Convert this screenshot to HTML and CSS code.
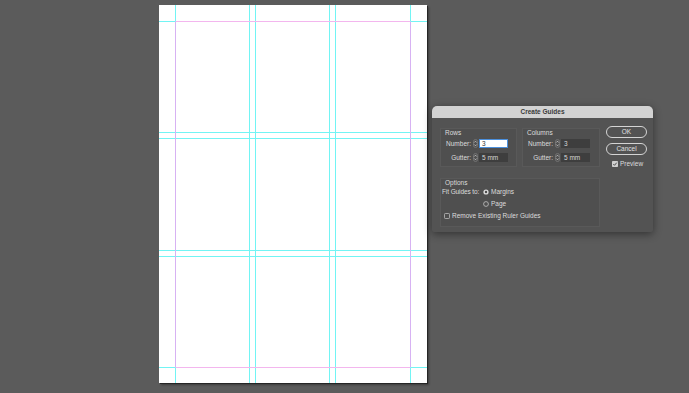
FILE: index.html
```html
<!DOCTYPE html>
<html lang="en">
    <head>
        <meta charset="utf-8" />
        <title>Create Guides</title>
        <link rel="stylesheet" href="styles.css">
    </head>
    <body>
        <div id="workspace">
            <!-- the document page with margin + ruler guides -->
            <div class="page">
                <svg class="guides" width="268" height="378" viewBox="0 0 268 378">
                    <g stroke="#72f4f4" stroke-width="1">
                        <line x1="16.5" y1="0" x2="16.5" y2="378"/>
                        <line x1="90.5" y1="0" x2="90.5" y2="378"/>
                        <line x1="96.5" y1="0" x2="96.5" y2="378"/>
                        <line x1="170.5" y1="0" x2="170.5" y2="378"/>
                        <line x1="176.5" y1="0" x2="176.5" y2="378"/>
                        <line x1="251.5" y1="0" x2="251.5" y2="378"/>
                        <line x1="0" y1="16.5" x2="268" y2="16.5"/>
                        <line x1="0" y1="127.5" x2="268" y2="127.5"/>
                        <line x1="0" y1="133.5" x2="268" y2="133.5"/>
                        <line x1="0" y1="245.5" x2="268" y2="245.5"/>
                        <line x1="0" y1="251.5" x2="268" y2="251.5"/>
                        <line x1="0" y1="362.5" x2="268" y2="362.5"/>
                    </g>
                    <!-- margins -->
                    <g stroke-width="1">
                        <line x1="16.5" y1="16.5" x2="251.5" y2="16.5" stroke="#f3b6ee"/>
                        <line x1="16.5" y1="362.5" x2="251.5" y2="362.5" stroke="#f3b6ee"/>
                        <line x1="16.5" y1="17" x2="16.5" y2="362" stroke="#d7b2f3"/>
                        <line x1="251.5" y1="17" x2="251.5" y2="362" stroke="#d7b2f3"/>
                    </g>
                </svg>
            </div>

            <div class="dialog">
                <div class="titlebar">Create Guides</div>
                <div class="dlgBody">
                    <div class="mainCol">
                        <div class="groupRow">
                            <div class="group rowsGroup">
                                <div class="legend">Rows</div>
                                <div class="field">
                                    <span class="lbl">Number:</span>
                                    <svg class="stepper" width="5" height="9" viewBox="0 0 5 9"><rect x="0.5" y="0.5" width="4" height="8" rx="2" fill="none" stroke="#7a7a7a" stroke-width="0.8"/><path d="M1.3 3.5 L2.5 2.2 L3.7 3.5 M1.3 5.5 L2.5 6.8 L3.7 5.5" fill="none" stroke="#d0d0d0" stroke-width="0.8"/></svg>
                                    <span class="inp focus">3</span>
                                </div>
                                <div class="field">
                                    <span class="lbl">Gutter:</span>
                                    <svg class="stepper" width="5" height="9" viewBox="0 0 5 9"><rect x="0.5" y="0.5" width="4" height="8" rx="2" fill="none" stroke="#7a7a7a" stroke-width="0.8"/><path d="M1.3 3.5 L2.5 2.2 L3.7 3.5 M1.3 5.5 L2.5 6.8 L3.7 5.5" fill="none" stroke="#d0d0d0" stroke-width="0.8"/></svg>
                                    <span class="inp">5 mm</span>
                                </div>
                            </div>
                            <div class="group colsGroup">
                                <div class="legend">Columns</div>
                                <div class="field">
                                    <span class="lbl">Number:</span>
                                    <svg class="stepper" width="5" height="9" viewBox="0 0 5 9"><rect x="0.5" y="0.5" width="4" height="8" rx="2" fill="none" stroke="#7a7a7a" stroke-width="0.8"/><path d="M1.3 3.5 L2.5 2.2 L3.7 3.5 M1.3 5.5 L2.5 6.8 L3.7 5.5" fill="none" stroke="#d0d0d0" stroke-width="0.8"/></svg>
                                    <span class="inp">3</span>
                                </div>
                                <div class="field">
                                    <span class="lbl">Gutter:</span>
                                    <svg class="stepper" width="5" height="9" viewBox="0 0 5 9"><rect x="0.5" y="0.5" width="4" height="8" rx="2" fill="none" stroke="#7a7a7a" stroke-width="0.8"/><path d="M1.3 3.5 L2.5 2.2 L3.7 3.5 M1.3 5.5 L2.5 6.8 L3.7 5.5" fill="none" stroke="#d0d0d0" stroke-width="0.8"/></svg>
                                    <span class="inp">5 mm</span>
                                </div>
                            </div>
                        </div>

                        <div class="group optGroup">
                            <div class="legend">Options</div>
                            <div class="optGrid">
                                <span class="optLbl">Fit Guides to:</span>
                                <span class="choice">
                                    <svg width="6" height="6" viewBox="0 0 6 6"><circle cx="3" cy="3" r="2.6" fill="#dcdcdc"/><circle cx="3" cy="3" r="1.2" fill="#4a4a4a"/></svg>
                                    Margins
                                </span>
                                <span></span>
                                <span class="choice">
                                    <svg width="6" height="6" viewBox="0 0 6 6"><circle cx="3" cy="3" r="2.4" fill="none" stroke="#c4c4c4" stroke-width="0.8"/></svg>
                                    Page
                                </span>
                            </div>
                            <div class="check removeChk">
                                <svg width="6" height="6" viewBox="0 0 6 6"><rect x="0.5" y="0.5" width="5" height="5" rx="0.8" fill="none" stroke="#bdbdbd" stroke-width="0.8"/></svg>
                                Remove Existing Ruler Guides
                            </div>
                        </div>
                    </div>

                    <div class="btnCol">
                        <a class="btn">OK</a>
                        <a class="btn">Cancel</a>
                        <div class="check previewChk">
                            <svg width="6" height="6" viewBox="0 0 6 6"><rect x="0" y="0" width="6" height="6" rx="0.8" fill="#d0d0d0"/><path d="M1.3 3.1 L2.5 4.3 L4.7 1.7" fill="none" stroke="#404040" stroke-width="0.9"/></svg>
                            Preview
                        </div>
                    </div>
                </div>
            </div>
        </div>
    </body>
</html>
```

FILE: styles.css
```css
/* body props */
body {
    margin:             0;
    background-color:   #5b5b5b;
    font-family:        "Liberation Sans", Arial, sans-serif;
    font-size:          6.5px;
    color:              #dcdcdc;
}
#workspace {
    display:            flex;
    align-items:        flex-start;
    width:              689px;
    height:             393px;
    padding:            5px 0 0 159px;
    box-sizing:         border-box;
    overflow:           hidden;
}
.page {
    width:              268px;
    height:             378px;
    background-color:   #FFFFFF;
    box-shadow:         1px 1px 0 #262626, 2px 2px 2px rgba(0, 0, 0, .35);
    flex:               none;
}
.guides {
    display:            block;
}

/* the dialog */
.dialog {
    width:              221px;
    height:             126px;
    margin:             101px 0 0 5px;
    background-color:   #535353;
    border-radius:      5px 5px 2px 2px;
    box-shadow:         0 2px 9px rgba(0, 0, 0, .45);
    flex:               none;
    overflow:           hidden;
}
.titlebar {
    height:             12px;
    line-height:        12px;
    background-color:   #d2d2d2;
    color:              #3a3a3a;
    font-weight:        bold;
    text-align:         center;
}
.dlgBody {
    display:            flex;
    padding:            8px 0 0 8px;
}
.mainCol {
    width:              160px;
    padding-top:        2px;
}
.groupRow {
    display:            flex;
    gap:                5px;
}
.group {
    background-color:   #4f4f4f;
    border:             1px solid #595959;
    box-sizing:         border-box;
}
.rowsGroup {
    width:              77px;
    height:             39px;
}
.colsGroup {
    width:              78px;
    height:             39px;
}
.legend {
    height:             7px;
    line-height:        7px;
    padding-left:       4px;
}
.field {
    display:            flex;
    align-items:        center;
    height:             10px;
    margin-top:         2px;
}
.field + .field {
    margin-top:         4px;
}
.lbl {
    width:              30px;
    text-align:         right;
    flex:               none;
}
.stepper {
    margin:             0 1px 0 2px;
    flex:               none;
}
.inp {
    width:              29px;
    height:             9px;
    line-height:        9px;
    padding-left:       3px;
    box-sizing:         border-box;
    background-color:   #3e3e3e;
    color:              #d8d8d8;
}
.inp.focus {
    background-color:   #FFFFFF;
    color:              #333333;
    border:             1px solid #4b8fdc;
    line-height:        7px;
    padding-left:       2px;
}

/* options */
.optGroup {
    height:             49px;
    margin-top:         11px;
}
.optGrid {
    display:            grid;
    grid-template-columns: 41px auto;
    row-gap:            4px;
    padding-left:       1px;
    margin-top:         2px;
    line-height:        8px;
}
.optLbl {
    letter-spacing:     -0.1px;
}
.choice, .check {
    display:            flex;
    align-items:        center;
    gap:                2px;
}
.removeChk {
    padding-left:       3px;
    margin-top:         4px;
    line-height:        8px;
}

/* buttons */
.btnCol {
    width:              41px;
    margin-left:        6px;
    display:            flex;
    flex-direction:     column;
}
a.btn {
    display:            block;
    height:             12px;
    line-height:        10px;
    border:             1px solid #d4d4d4;
    border-radius:      6px;
    box-sizing:         border-box;
    text-align:         center;
    color:              #e0e0e0;
    text-decoration:    none;
}
a.btn + a.btn {
    margin-top:         5px;
}
.previewChk {
    margin:             5px 0 0 6px;
    line-height:        8px;
}
```
